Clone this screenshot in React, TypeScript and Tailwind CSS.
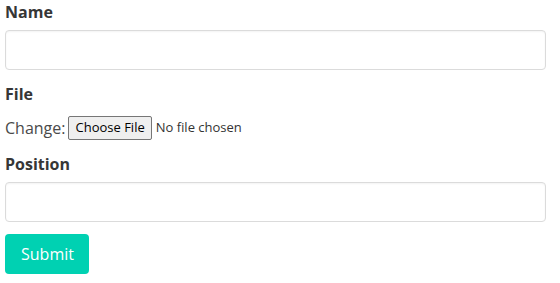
export default function App() {
  return (
    <div
      className="bg-white text-[#4a4a4a] px-[5px] pr-[14px] pt-0"
      style={{ fontFamily: '"Open Sans", "Noto Sans", sans-serif' }}
    >
      <form onSubmit={(e) => e.preventDefault()}>
        <div className="mb-3">
          <label className="block text-base font-bold text-[#363636] leading-6 mb-[6px]">Name</label>
          <input
            type="text"
            className="block w-full h-10 rounded border border-[#dbdbdb] bg-white px-3 text-base outline-none shadow-[inset_0_1px_2px_rgba(10,10,10,0.05)]"
          />
        </div>
        <div className="mb-3">
          <label className="block text-base font-bold text-[#363636] leading-6 mb-[10px]">File</label>
          <div className="flex items-center h-6 text-base">
            <span className="mr-[3px]">Change:</span>
            <input type="file" className="text-[13px] text-[#333] file:mr-1 file:px-[6px] file:py-[1px] file:text-[13px] file:text-black file:border file:border-[#767676] file:rounded-[2px] file:bg-[#efefef]" />
          </div>
        </div>
        <div className="mb-3">
          <label className="block text-base font-bold text-[#363636] leading-6 mb-[6px]">Position</label>
          <input
            type="text"
            className="block w-full h-10 rounded border border-[#dbdbdb] bg-white px-3 text-base outline-none shadow-[inset_0_1px_2px_rgba(10,10,10,0.05)]"
          />
        </div>
        <button
          type="submit"
          className="h-10 px-4 rounded bg-[#00d1b2] text-white text-base w-[84px]"
        >
          Submit
        </button>
      </form>
    </div>
  );
}
